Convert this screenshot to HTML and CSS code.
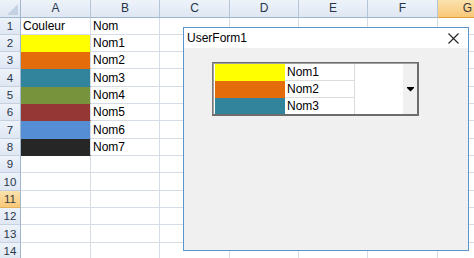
FILE: index.html
```html
<!DOCTYPE html>
<html lang="fr">
<head>
    <meta charset="UTF-8">
    <title>UserForm1</title>
    <link rel="stylesheet" href="styles.css">
</head>
<body>
    <div id="sheet">
        <div class="grid">
            <div class="hd corner"><span class="tri"></span></div>
            <div class="hd col">A</div>
            <div class="hd col">B</div>
            <div class="hd col">C</div>
            <div class="hd col">D</div>
            <div class="hd col">E</div>
            <div class="hd col">F</div>
            <div class="hd col sel">G</div>

            <div class="hd row">1</div><div class="cell">Couleur</div><div class="cell">Nom</div><div class="cell"></div><div class="cell"></div><div class="cell"></div><div class="cell"></div><div class="cell"></div>
            <div class="hd row">2</div><div class="cell c-yellow"></div><div class="cell">Nom1</div><div class="cell"></div><div class="cell"></div><div class="cell"></div><div class="cell"></div><div class="cell"></div>
            <div class="hd row">3</div><div class="cell c-orange"></div><div class="cell">Nom2</div><div class="cell"></div><div class="cell"></div><div class="cell"></div><div class="cell"></div><div class="cell"></div>
            <div class="hd row">4</div><div class="cell c-teal"></div><div class="cell">Nom3</div><div class="cell"></div><div class="cell"></div><div class="cell"></div><div class="cell"></div><div class="cell"></div>
            <div class="hd row">5</div><div class="cell c-olive"></div><div class="cell">Nom4</div><div class="cell"></div><div class="cell"></div><div class="cell"></div><div class="cell"></div><div class="cell"></div>
            <div class="hd row">6</div><div class="cell c-red"></div><div class="cell">Nom5</div><div class="cell"></div><div class="cell"></div><div class="cell"></div><div class="cell"></div><div class="cell"></div>
            <div class="hd row">7</div><div class="cell c-blue"></div><div class="cell">Nom6</div><div class="cell"></div><div class="cell"></div><div class="cell"></div><div class="cell"></div><div class="cell"></div>
            <div class="hd row">8</div><div class="cell c-black"></div><div class="cell">Nom7</div><div class="cell"></div><div class="cell"></div><div class="cell"></div><div class="cell"></div><div class="cell"></div>
            <div class="hd row">9</div><div class="cell"></div><div class="cell"></div><div class="cell"></div><div class="cell"></div><div class="cell"></div><div class="cell"></div><div class="cell"></div>
            <div class="hd row">10</div><div class="cell"></div><div class="cell"></div><div class="cell"></div><div class="cell"></div><div class="cell"></div><div class="cell"></div><div class="cell"></div>
            <div class="hd row sel">11</div><div class="cell"></div><div class="cell"></div><div class="cell"></div><div class="cell"></div><div class="cell"></div><div class="cell"></div><div class="cell"></div>
            <div class="hd row">12</div><div class="cell"></div><div class="cell"></div><div class="cell"></div><div class="cell"></div><div class="cell"></div><div class="cell"></div><div class="cell"></div>
            <div class="hd row">13</div><div class="cell"></div><div class="cell"></div><div class="cell"></div><div class="cell"></div><div class="cell"></div><div class="cell"></div><div class="cell"></div>
            <div class="hd row">14</div><div class="cell"></div><div class="cell"></div><div class="cell"></div><div class="cell"></div><div class="cell"></div><div class="cell"></div><div class="cell"></div>
        </div>

        <div id="userform">
            <div class="titlebar">
                <span class="title">UserForm1</span>
                <svg class="close" width="11" height="11" viewBox="0 0 11 11">
                    <path d="M0.5 0.5 L10.5 10.5 M10.5 0.5 L0.5 10.5" stroke="#222" stroke-width="1.1" fill="none"/>
                </svg>
            </div>
            <div class="client">
                <div class="combo">
                    <div class="list">
                        <div class="item"><span class="swatch c-yellow"></span><span class="name">Nom1</span></div>
                        <div class="item"><span class="swatch c-orange"></span><span class="name">Nom2</span></div>
                        <div class="item"><span class="swatch c-teal"></span><span class="name">Nom3</span></div>
                    </div>
                    <div class="blank"></div>
                    <div class="dropbtn">
                        <svg width="7" height="5" viewBox="0 0 7 5">
                            <rect x="0" y="0" width="7" height="1" fill="#000"/>
                            <path d="M0 1 H7 L3.5 4.5 Z" fill="#000"/>
                        </svg>
                    </div>
                </div>
            </div>
        </div>
    </div>
</body>
</html>
```

FILE: styles.css
```css
body {
    margin: 0;
    padding: 0;
    background: #fff;
    font-family: 'Liberation Sans', Arial, sans-serif;
    overflow: hidden;
}
#sheet {
    position: relative;
    width: 474px;
    height: 258px;
    overflow: hidden;
}
.grid {
    display: grid;
    grid-template-columns: 21px 70px 69px 70px 69px 69px 70px 60px;
    grid-template-rows: 17.5px repeat(14, 17.33px);
}
.hd {
    box-sizing: border-box;
    background: linear-gradient(#eef3fa, #dfe7f3);
    border-right: 1px solid #b4c4d9;
    border-bottom: 1px solid #9eb6ce;
    color: #27364a;
    font-size: 12px;
    display: flex;
    align-items: center;
    justify-content: center;
}
.hd.row {
    border-bottom: 1px solid #c5d1e0;
    border-right: 1px solid #9eb6ce;
    font-size: 11.5px;
}
.hd.sel {
    background: linear-gradient(#fbe2ae, #f8c878);
    color: #3a3a3a;
    border-bottom-color: #e5b25f;
}
.hd.col.sel {
    border-bottom-color: #e2a33d;
}
.corner {
    position: relative;
    border-right-color: #9eb6ce;
}
.corner .tri {
    position: absolute;
    right: 2px;
    bottom: 2px;
    width: 0;
    height: 0;
    border-left: 11px solid transparent;
    border-bottom: 11px solid #c4d2e3;
}
.cell {
    box-sizing: border-box;
    border-right: 1px solid #d6dce6;
    border-bottom: 1px solid #d6dce6;
    font-size: 12px;
    color: #000;
    padding-left: 2px;
    display: flex;
    align-items: flex-end;
    padding-bottom: 1px;
}
.c-yellow { background: #ffff00; border-bottom-color: #ffff00; }
.c-orange { background: #e46c0a; border-bottom-color: #e46c0a; }
.c-teal { background: #31849b; border-bottom-color: #31849b; }
.c-olive { background: #77933c; border-bottom-color: #77933c; }
.c-red { background: #953735; border-bottom-color: #953735; }
.c-blue { background: #558ed5; border-bottom-color: #558ed5; }
.c-black { background: #262626; border-bottom-color: #262626; }

#userform {
    position: absolute;
    left: 183px;
    top: 27px;
    width: 286px;
    height: 224px;
    box-sizing: border-box;
    border: 1px solid #5b95cc;
    background: #f0f0f0;
    display: flex;
    flex-direction: column;
}
.titlebar {
    height: 20px;
    background: #fff;
    display: flex;
    align-items: center;
    justify-content: space-between;
    padding: 0 9px 0 3px;
}
.title {
    font-size: 12px;
    color: #000;
}
.close {
    display: block;
}
.client {
    flex: 1;
    padding: 14px 0 0 28px;
}
.combo {
    box-sizing: border-box;
    width: 207px;
    height: 54px;
    border: 1px solid #6d6d6d;
    border-right-width: 2px;
    border-bottom-width: 2px;
    border-left-color: #7a7a7a;
    box-shadow: inset 1px 1px 0 #a0a0a0;
    padding: 1px 0 0 2px;
    background: #fff;
    display: flex;
}
.list {
    display: flex;
    flex-direction: column;
}
.item {
    display: flex;
    height: 17px;
}
.item:nth-child(3) {
    height: 16px;
}
.swatch {
    width: 70px;
}
.name {
    box-sizing: border-box;
    width: 70px;
    border-right: 1px solid #dcdcdc;
    border-bottom: 1px solid #dcdcdc;
    font-size: 12px;
    padding-left: 2px;
    display: flex;
    align-items: center;
}
.item:nth-child(3) .name {
    border-bottom: none;
}
.blank {
    flex: 1;
}
.dropbtn {
    width: 14px;
    background: #f0f0f0;
    display: flex;
    align-items: center;
    justify-content: center;
}
.dropbtn svg {
    display: block;
}
```
